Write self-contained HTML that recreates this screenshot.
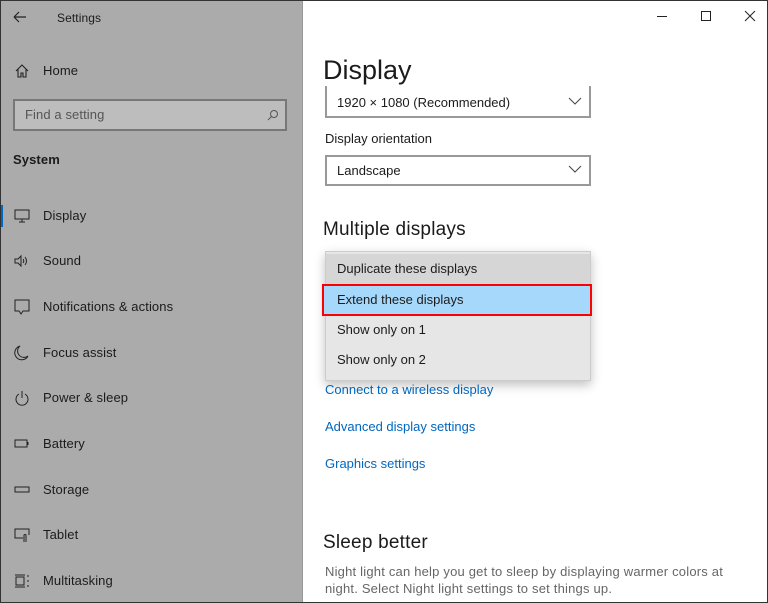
<!DOCTYPE html>
<html><head><style>
*{margin:0;padding:0;box-sizing:border-box}
body{width:768px;height:603px;overflow:hidden;font-family:"Liberation Sans",sans-serif;font-size:13px;color:#1b1b1b;background:#fff;position:relative}
.win{position:absolute;left:0;top:0;width:768px;height:603px;border:1px solid #333}
.side{position:absolute;left:1px;top:1px;width:301px;height:601px;background:#ababab}
.t{position:absolute;white-space:nowrap;line-height:16px}
.side .t{letter-spacing:0.1px}
.ic{position:absolute;left:13px;width:16px;height:16px}
.box{position:absolute;border:2px solid #999;background:#fff}
.lnk{position:absolute;left:325px;color:#0067c0;font-size:13px;line-height:16px}
svg{overflow:visible}
</style></head><body>
<div class="win"></div>
<div class="side">
<svg style="position:absolute;left:12px;top:10px" width="14" height="12"><path d="M1 6H13M1 6L6 1M1 6L6 11" stroke="#222" stroke-width="1.2" fill="none"/></svg>
<div class="t" style="left:56px;top:9px;font-size:12px">Settings</div>
<svg class="ic" style="top:62px" viewBox="0 0 16 16"><path d="M2 8L8 2L14 8M4 6V14H7V10H9V14H12V6" stroke="#222" stroke-width="1.1" fill="none"/></svg>
<div class="t" style="left:42px;top:62px">Home</div>
<div style="position:absolute;left:12px;top:98px;width:274px;height:32px;border:2px solid #777;background:#bdbdbd"></div>
<div class="t" style="left:24px;top:106px;color:#555">Find a setting</div>
<svg style="position:absolute;left:266px;top:108px" width="12" height="12"><circle cx="7" cy="5" r="3.5" stroke="#555" fill="none"/><path d="M4.5 7.5L1 11" stroke="#555"/></svg>
<div class="t" style="left:12px;top:151px;font-weight:bold">System</div>
<div style="position:absolute;left:0;top:204px;width:2px;height:22px;background:#0067c0"></div>
<svg class="ic" style="top:207px" viewBox="0 0 16 16"><rect x="1" y="2" width="14" height="9" stroke="#222" fill="none"/><path d="M8 11V14M5 14H11" stroke="#222"/></svg>
<div class="t" style="left:42px;top:207px">Display</div>
<svg class="ic" style="top:252px" viewBox="0 0 16 16"><path d="M1 6H4L7 3V13L4 10H1Z M9 6Q10.5 8 9 10 M11 4Q14 8 11 12" stroke="#222" fill="none"/></svg>
<div class="t" style="left:42px;top:252px">Sound</div>
<svg class="ic" style="top:298px" viewBox="0 0 16 16"><path d="M1 1H15V12H9L7 15L5 12H1Z" stroke="#222" fill="none"/></svg>
<div class="t" style="left:42px;top:298px">Notifications &amp; actions</div>
<svg class="ic" style="top:344px" viewBox="0 0 16 16"><path d="M6 1A7 7 0 1 0 14 11A6 6 0 0 1 6 1Z" stroke="#222" fill="none"/></svg>
<div class="t" style="left:42px;top:344px">Focus assist</div>
<svg class="ic" style="top:389px" viewBox="0 0 16 16"><path d="M5 4A6 6 0 1 0 11 4M8 1V8" stroke="#222" fill="none"/></svg>
<div class="t" style="left:42px;top:389px">Power &amp; sleep</div>
<svg class="ic" style="top:435px" viewBox="0 0 16 16"><rect x="1" y="4" width="12" height="7" stroke="#222" fill="none"/><path d="M14 6V9" stroke="#222"/></svg>
<div class="t" style="left:42px;top:435px">Battery</div>
<svg class="ic" style="top:481px" viewBox="0 0 16 16"><rect x="1" y="5" width="14" height="5" stroke="#222" fill="none"/></svg>
<div class="t" style="left:42px;top:481px">Storage</div>
<svg class="ic" style="top:526px" viewBox="0 0 16 16"><path d="M9 11H1V2H15V8M10 15V8Q11 7 12 8V15" stroke="#222" fill="none"/></svg>
<div class="t" style="left:42px;top:526px">Tablet</div>
<svg class="ic" style="top:572px" viewBox="0 0 16 16"><path d="M1 2H11M1 14H11M2 4H10V12H2Z M14 2V4M14 7V9M14 12V14" stroke="#222" fill="none"/></svg>
<div class="t" style="left:42px;top:572px">Multitasking</div>
</div>
<div style="position:absolute;left:302px;top:1px;width:1px;height:601px;background:#999"></div>
<div style="position:absolute;left:657px;top:16px;width:10px;height:1px;background:#222"></div>
<div style="position:absolute;left:701px;top:11px;width:10px;height:10px;border:1px solid #222"></div>
<svg style="position:absolute;left:745px;top:11px" width="10" height="10"><path d="M0 0L10 10M10 0L0 10" stroke="#222"/></svg>
<div class="t" style="left:323px;top:54px;font-size:27px;line-height:32px">Display</div>
<div class="box" style="left:325px;top:86px;width:266px;height:32px;border-top:none"></div>
<div class="t" style="left:337px;top:95px">1920 × 1080 (Recommended)</div>
<svg style="position:absolute;left:569px;top:98px" width="12" height="7"><path d="M0 0L6 6L12 0" stroke="#444" fill="none"/></svg>
<div class="t" style="left:325px;top:131px">Display orientation</div>
<div class="box" style="left:325px;top:155px;width:266px;height:31px"></div>
<div class="t" style="left:337px;top:163px">Landscape</div>
<svg style="position:absolute;left:569px;top:166px" width="12" height="7"><path d="M0 0L6 6L12 0" stroke="#444" fill="none"/></svg>
<div class="t" style="left:323px;top:219px;font-size:19px;line-height:22px;letter-spacing:0.2px">Multiple displays</div>
<div style="position:absolute;left:325px;top:251px;width:266px;height:130px;background:#e6e6e6;border:1px solid #ccc;box-shadow:0 4px 10px rgba(0,0,0,.25)"></div>
<div style="position:absolute;left:326px;top:254px;width:264px;height:30px;background:#d6d6d6"></div>
<div class="t" style="left:337px;top:261px">Duplicate these displays</div>
<div style="position:absolute;left:322px;top:284px;width:270px;height:32px;background:#a6d8fb;border:2px solid #f00"></div>
<div class="t" style="left:337px;top:292px">Extend these displays</div>
<div class="t" style="left:337px;top:322px">Show only on 1</div>
<div class="t" style="left:337px;top:352px">Show only on 2</div>
<div class="lnk t" style="top:382px">Connect to a wireless display</div>
<div class="lnk t" style="top:419px">Advanced display settings</div>
<div class="lnk t" style="top:456px">Graphics settings</div>
<div class="t" style="left:323px;top:532px;font-size:19px;line-height:22px;letter-spacing:0.2px">Sleep better</div>
<div class="t" style="left:325px;top:564px;color:#666;letter-spacing:0.2px">Night light can help you get to sleep by displaying warmer colors at</div>
<div class="t" style="left:325px;top:581px;color:#666;letter-spacing:0.2px">night. Select Night light settings to set things up.</div>
</body></html>
